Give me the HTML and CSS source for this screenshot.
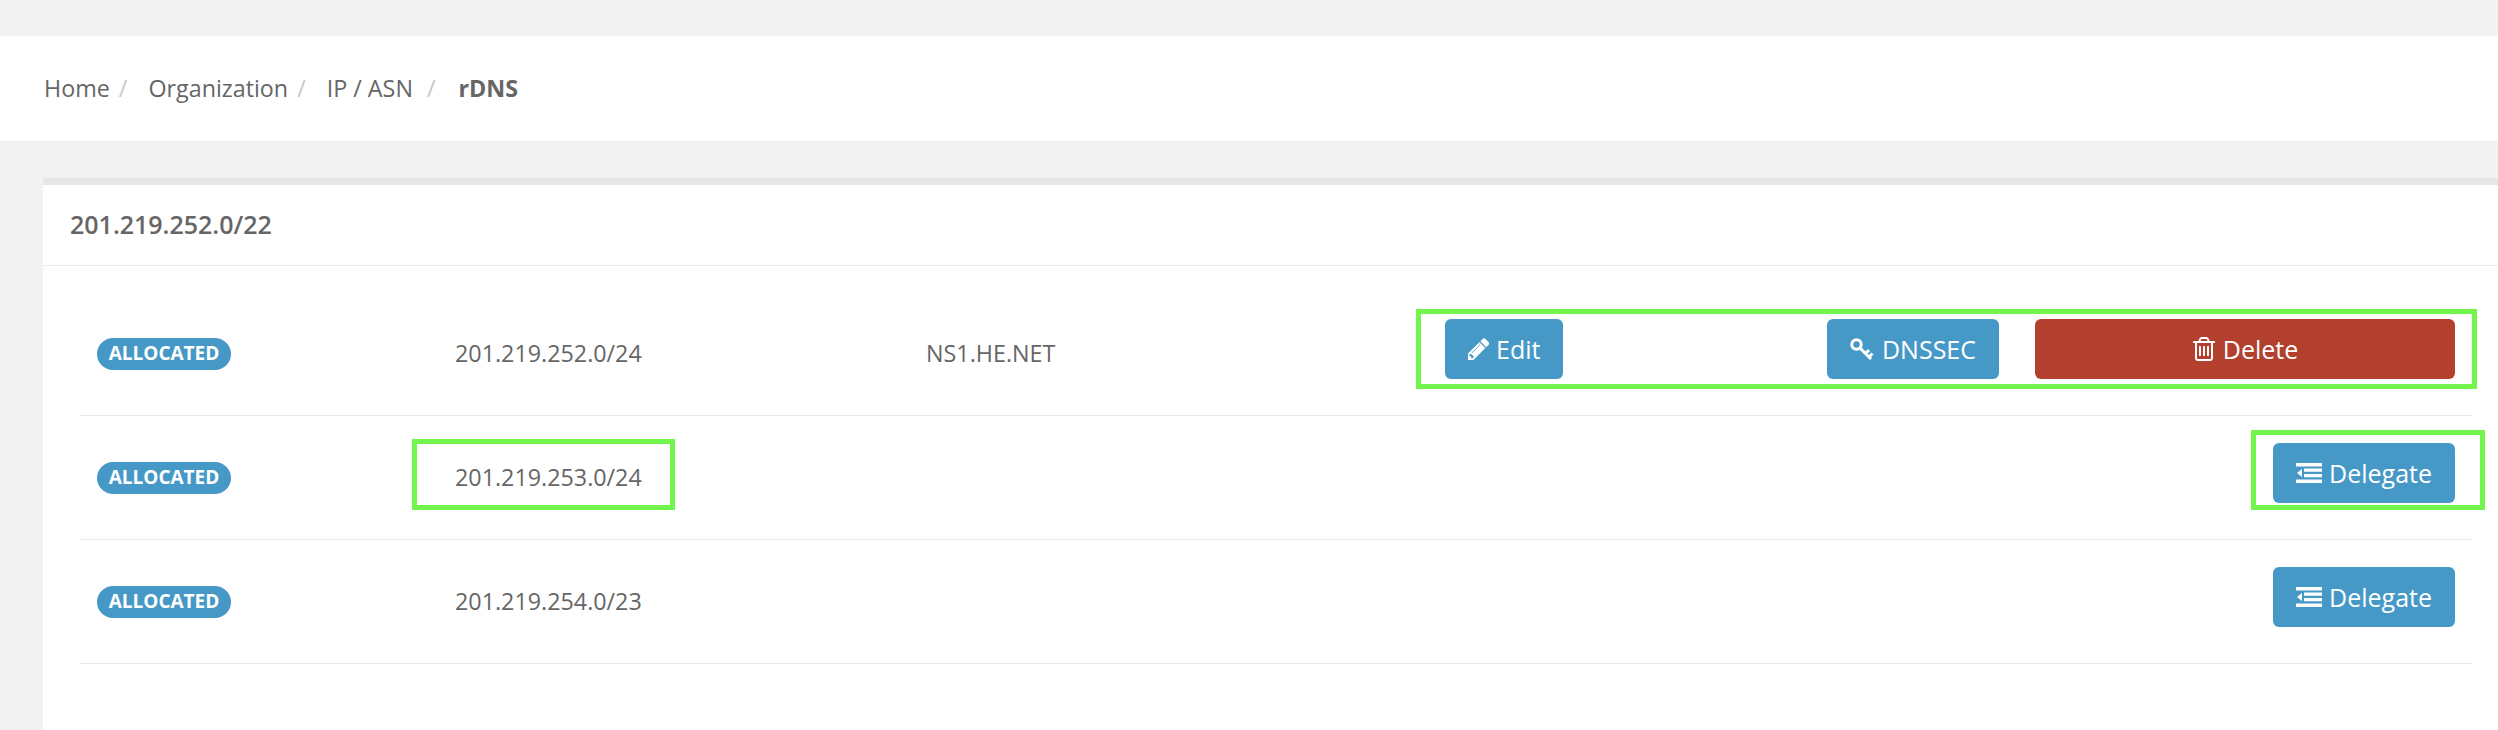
FILE: index.html
```html
<!DOCTYPE html>
<html lang="en">
  <head>
    <meta charset="UTF-8" />
    <title>rDNS</title>
    <link rel="stylesheet" href="styles.css">
  </head>
  <body>

    <ol class="breadcrumb">
      <li>Home</li>
      <li>Organization</li>
      <li>IP / ASN</li>
      <li class="active">rDNS</li>
    </ol>

    <div class="card">
      <div class="card-header">201.219.252.0/22</div>
      <div class="card-body">

        <div class="row">
          <div class="status"><span class="badge">ALLOCATED</span></div>
          <div>201.219.252.0/24</div>
          <div>NS1.HE.NET</div>
          <div class="actions marked">
            <button class="btn">
              <svg class="icon icon-edit" viewBox="192 128 1408 1536"><path d="M491 1536l91-91-235-235-91 91v107h128v128h107zm523-928q0-22-22-22-10 0-17 7l-542 542q-7 7-7 17 0 22 22 22 10 0 17-7l542-542q7-7 7-17zm-54-192l416 416-832 832h-416v-416zm683 96q0 53-37 90l-166 166-416-416 166-165q36-38 90-38 53 0 91 38l235 234q37 39 37 91z"/></svg>
              Edit
            </button>
            <button class="btn btn-push">
              <svg class="icon icon-key" viewBox="0 0 25 22"><circle cx="6.500" cy="6.500" r="4.700"/><path d="M10 10l11 11M15.500 15.500l3.500-3.500M19 19l3.500-3.500"/></svg>
              DNSSEC
            </button>
            <button class="btn btn-danger">
              <svg class="icon icon-trash" viewBox="128 128 1536 1536"><path d="M704 736v576q0 14-9 23t-23 9h-64q-14 0-23-9t-9-23v-576q0-14 9-23t23-9h64q14 0 23 9t9 23zm256 0v576q0 14-9 23t-23 9h-64q-14 0-23-9t-9-23v-576q0-14 9-23t23-9h64q14 0 23 9t9 23zm256 0v576q0 14-9 23t-23 9h-64q-14 0-23-9t-9-23v-576q0-14 9-23t23-9h64q14 0 23 9t9 23zm128 724v-948h-896v948q0 22 7 40.5t14.5 27 10.5 8.5h832q3 0 10.5-8.5t14.5-27 7-40.5zm-672-1076h448l-48-117q-7-9-17-11h-317q-10 2-17 11zm928 32v64q0 14-9 23t-23 9h-96v948q0 83-47 143.5t-113 60.5h-832q-66 0-113-58.5t-47-141.5v-952h-96q-14 0-23-9t-9-23v-64q0-14 9-23t23-9h309l70-167q15-37 54-63t79-26h320q40 0 79 26t54 63l70 167h309q14 0 23 9t9 23z"/></svg>
              Delete
            </button>
          </div>
        </div>

        <div class="row">
          <div class="status"><span class="badge">ALLOCATED</span></div>
          <div class="ip-cell">201.219.253.0/24<span class="mark-ip"></span></div>
          <div></div>
          <div class="actions">
            <button class="btn btn-push">
              <svg class="icon icon-outdent" viewBox="0 0 26 20"><path d="M0 0h26v3.600H0zM8 5.500h18v3.200H8zM8 11h18v3.200H8zM0 16.400h26V20H0zM6 6v8l-5-4z"/></svg>
              Delegate
              <span class="mark-btn"></span>
            </button>
          </div>
        </div>

        <div class="row">
          <div class="status"><span class="badge">ALLOCATED</span></div>
          <div>201.219.254.0/23</div>
          <div></div>
          <div class="actions">
            <button class="btn btn-push">
              <svg class="icon icon-outdent" viewBox="0 0 26 20"><path d="M0 0h26v3.600H0zM8 5.500h18v3.200H8zM8 11h18v3.200H8zM0 16.400h26V20H0zM6 6v8l-5-4z"/></svg>
              Delegate
            </button>
          </div>
        </div>

      </div>
    </div>

  </body>
</html>
```

FILE: styles.css
```css
html, body {
  height: 100%;
}

body {
  margin: 0;
  padding-top: 36px;
  box-sizing: border-box;
  background-color: #f2f2f2;
  color: #666;
  font-family: "Open Sans", sans-serif;
  font-size: 23.3px;
  display: flex;
  flex-direction: column;
  overflow: hidden;
}

.breadcrumb {
  display: flex;
  align-items: center;
  box-sizing: border-box;
  height: 106px;
  margin: 0;
  padding: 0 0 2px 44px;
  list-style: none;
  background-color: white;
  border-bottom: 1px solid #ececec;
}

.breadcrumb li::after {
  content: "/";
  color: #c8c8c8;
  margin-left: 9px;
  margin-right: 21px;
}

.breadcrumb li:nth-child(3)::after {
  margin-left: 14px;
  margin-right: 23px;
}

.breadcrumb .active {
  font-weight: 700;
}

.breadcrumb .active::after {
  content: none;
}

.card {
  flex: 1;
  margin: 36px 0 0 43px;
  background-color: white;
  border-top: 7px solid #e6e7e8;
}

.card-header {
  display: flex;
  align-items: center;
  box-sizing: border-box;
  height: 81px;
  padding: 0 0 2px 27px;
  font-size: 25px;
  font-weight: 600;
  border-bottom: 1px solid #ececec;
}

.card-body {
  padding: 26px 25px 0 36px;
}

.row {
  display: grid;
  grid-template-columns: 358px 471px 519px 1fr;
  align-items: center;
  box-sizing: border-box;
  height: 124px;
  padding: 0 18px 2px;
  border-bottom: 1px solid #e9e9e9;
}

.status {
  display: flex;
  margin-top: 2px;
}

.badge {
  box-sizing: border-box;
  width: 134px;
  height: 32px;
  line-height: 31px;
  text-align: center;
  border-radius: 16px;
  background-color: #4699c7;
  color: white;
  font-size: 19px;
  font-weight: 700;
}

.actions {
  display: flex;
  position: relative;
  gap: 36px;
  margin-bottom: 7px;
}

.btn {
  display: flex;
  align-items: center;
  justify-content: center;
  gap: 7px;
  position: relative;
  height: 60px;
  padding: 0 23px;
  border: none;
  border-radius: 6px;
  background-color: #4699c7;
  color: white;
  font-family: inherit;
  font-size: 25px;
}

.btn-push {
  margin-left: auto;
}

.btn-danger {
  width: 420px;
  background-color: #b33f2f;
}

.icon {
  display: block;
  fill: white;
}

.icon-edit {
  width: 21px;
  height: 22px;
}

.icon-key {
  width: 25px;
  height: 22px;
  fill: none;
  stroke: white;
  stroke-width: 3;
}

.icon-trash {
  width: 24px;
  height: 24px;
}

.icon-outdent {
  width: 26px;
  height: 20px;
}

/* green annotation boxes drawn over the screenshot */
.marked::after,
.mark-ip,
.mark-btn {
  content: "";
  position: absolute;
  border: 5px solid #72f54c;
  pointer-events: none;
}

.marked::after {
  left: -29px;
  right: -22px;
  top: -10px;
  bottom: -10px;
}

.ip-cell {
  position: relative;
}

.mark-ip {
  left: -43px;
  width: 253px;
  top: -22px;
  height: 61px;
}

.mark-btn {
  left: -22px;
  right: -30px;
  top: -13px;
  bottom: -7px;
}
```
